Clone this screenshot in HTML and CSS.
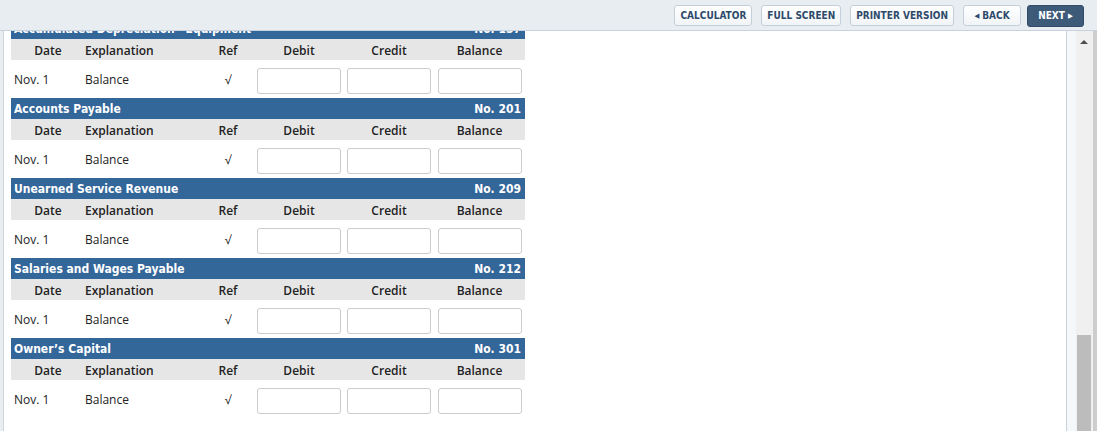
FILE: index.html
```html
<!DOCTYPE html>
<html>
<head>
<meta charset="utf-8">
<link rel="stylesheet" href="styles.css">
</head>
<body>
<div class="topbar">
  <button class="btn">CALCULATOR</button>
  <button class="btn">FULL SCREEN</button>
  <button class="btn">PRINTER VERSION</button>
  <button class="btn btn-back"><span class="tri">&#9664;</span>BACK</button>
  <button class="btn btn-next">NEXT<span class="tri">&#9654;</span></button>
</div>
<div class="main">
  <div class="gutter"></div>
  <div class="frame">
    <div class="content">
      <div class="ledger">
        <div class="title"><span>Accumulated Depreciation—Equipment</span><span>No. 157</span></div>
        <div class="grid head"><span class="c">Date</span><span>Explanation</span><span class="c">Ref</span><span class="c">Debit</span><span class="c">Credit</span><span class="c">Balance</span></div>
        <div class="grid row"><span class="d">Nov. 1</span><span>Balance</span><span class="c">√</span><span class="c"><input></span><span class="c"><input></span><span class="c"><input></span></div>
      </div>
      <div class="ledger">
        <div class="title"><span>Accounts Payable</span><span>No. 201</span></div>
        <div class="grid head"><span class="c">Date</span><span>Explanation</span><span class="c">Ref</span><span class="c">Debit</span><span class="c">Credit</span><span class="c">Balance</span></div>
        <div class="grid row"><span class="d">Nov. 1</span><span>Balance</span><span class="c">√</span><span class="c"><input></span><span class="c"><input></span><span class="c"><input></span></div>
      </div>
      <div class="ledger">
        <div class="title"><span>Unearned Service Revenue</span><span>No. 209</span></div>
        <div class="grid head"><span class="c">Date</span><span>Explanation</span><span class="c">Ref</span><span class="c">Debit</span><span class="c">Credit</span><span class="c">Balance</span></div>
        <div class="grid row"><span class="d">Nov. 1</span><span>Balance</span><span class="c">√</span><span class="c"><input></span><span class="c"><input></span><span class="c"><input></span></div>
      </div>
      <div class="ledger">
        <div class="title"><span>Salaries and Wages Payable</span><span>No. 212</span></div>
        <div class="grid head"><span class="c">Date</span><span>Explanation</span><span class="c">Ref</span><span class="c">Debit</span><span class="c">Credit</span><span class="c">Balance</span></div>
        <div class="grid row"><span class="d">Nov. 1</span><span>Balance</span><span class="c">√</span><span class="c"><input></span><span class="c"><input></span><span class="c"><input></span></div>
      </div>
      <div class="ledger">
        <div class="title"><span>Owner’s Capital</span><span>No. 301</span></div>
        <div class="grid head"><span class="c">Date</span><span>Explanation</span><span class="c">Ref</span><span class="c">Debit</span><span class="c">Credit</span><span class="c">Balance</span></div>
        <div class="grid row"><span class="d">Nov. 1</span><span>Balance</span><span class="c">√</span><span class="c"><input></span><span class="c"><input></span><span class="c"><input></span></div>
      </div>
    </div>
  </div>
  <div class="strip"></div>
  <div class="scrollbar">
    <div class="arrow"></div>
    <div class="thumb"></div>
  </div>
  <div class="outer"></div>
</div>
</body>
</html>
```
FILE: styles.css
```css
html, body {
  margin: 0;
  padding: 0;
  height: 100%;
  overflow: hidden;
  background: #e8edf2;
}
.topbar {
  height: 30px;
  border-bottom: 1px solid #c9d2dc;
  display: flex;
  align-items: center;
  justify-content: flex-end;
  padding-right: 13px;
  gap: 9px;
}
.btn {
  height: 21px;
  padding: 0 5px;
  font-family: "DejaVu Sans Condensed", "DejaVu Sans", sans-serif;
  font-weight: bold;
  font-size: 10px;
  color: #2e4a6b;
  background: linear-gradient(#ffffff, #f1f4f7);
  border: 1px solid #c5cfd9;
  border-radius: 3px;
  margin-top: 1px;
  white-space: nowrap;
}
.btn-back {
  width: 58px;
  padding: 0;
}
.btn-next {
  width: 57px;
  height: 22px;
  padding: 0;
  background: #3d5a78;
  color: #ffffff;
  border-color: #324c68;
  margin-left: -3px;
}
.tri {
  font-size: 7px;
  vertical-align: 1px;
  margin: 0 3px;
}
.btn-back .tri { margin-left: 0; }
.btn-next .tri { margin-right: 0; }
.main {
  display: flex;
  height: 400px;
}
.gutter {
  width: 3px;
  background: #e8edf2;
  border-right: 1px solid #cdd5de;
}
.frame {
  width: 1062px;
  background: #ffffff;
  border-right: 1px solid #c9d1dc;
  overflow: hidden;
}
.content {
  margin-top: -13px;
  padding-left: 7px;
  width: 514px;
}
.title {
  height: 21px;
  background: #336699;
  color: #ffffff;
  display: flex;
  justify-content: space-between;
  align-items: center;
  padding: 0 4px 0 3px;
  font-family: "DejaVu Sans Condensed", "DejaVu Sans", sans-serif;
  font-weight: bold;
  font-size: 12px;
}
.grid {
  display: grid;
  grid-template-columns: 74px 117px 52px 90px 90px 91px;
  align-items: center;
  font-family: "Open Sans", sans-serif;
  color: #222222;
}
.head {
  height: 21px;
  background: #e6e6e6;
  font-size: 12px;
  font-weight: 600;
  padding-top: 1px;
  box-sizing: border-box;
}
.row {
  height: 38px;
  font-size: 12px;
}
.row .d {
  padding-left: 3px;
}
.c {
  text-align: center;
}
.row input {
  width: 84px;
  height: 26px;
  box-sizing: border-box;
  border: 1px solid #cccccc;
  border-radius: 3px;
  margin-top: 4px;
  display: block;
  margin-left: auto;
  margin-right: auto;
}
.strip {
  width: 9px;
  background: #f5f8fb;
}
.scrollbar {
  width: 17px;
  background: #f0f0f0;
  position: relative;
}
.arrow {
  position: absolute;
  left: 4px;
  top: 9px;
  width: 0;
  height: 0;
  border-left: 4px solid transparent;
  border-right: 4px solid transparent;
  border-bottom: 4px solid #505050;
}
.thumb {
  position: absolute;
  left: 1px;
  right: 2px;
  top: 304px;
  bottom: 0;
  background: #bcbcbc;
}
.outer {
  width: 4px;
  background: #cdcdcd;
}
```
